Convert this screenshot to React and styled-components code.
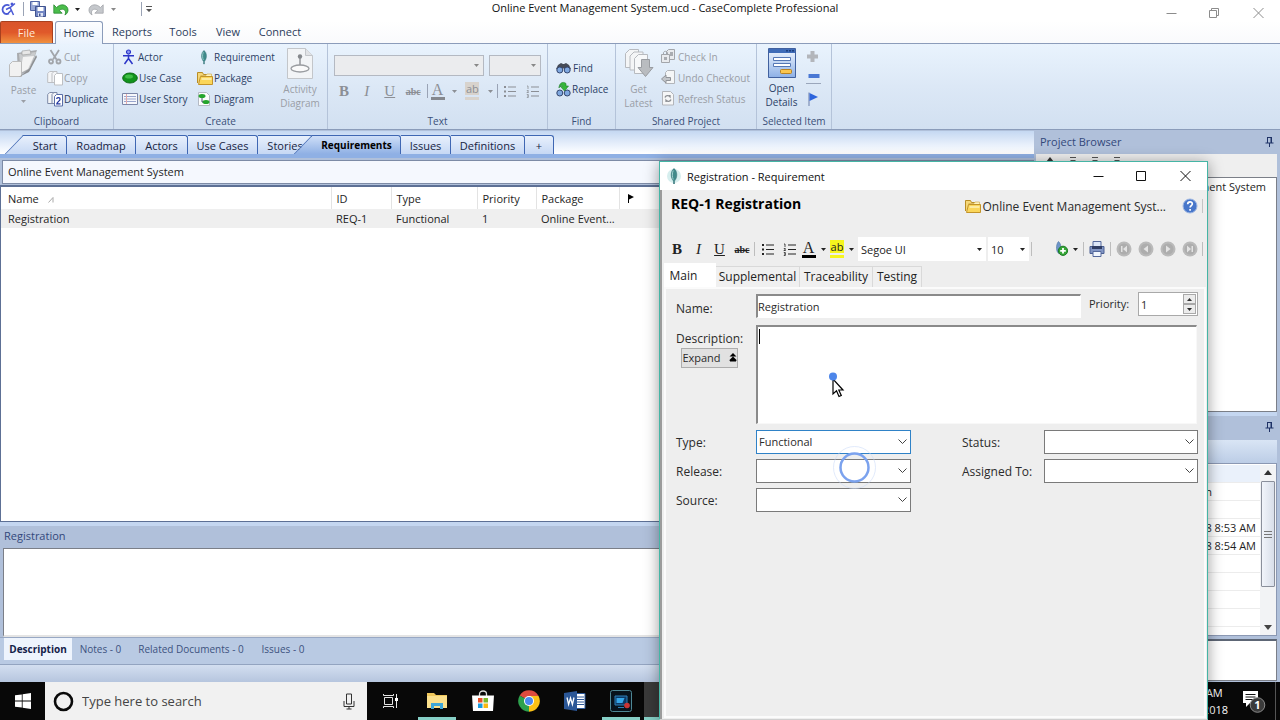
import React from 'react';
import styled, { createGlobalStyle, css } from 'styled-components';

const UI = '"Open Sans", "Noto Sans", sans-serif';
const SERIF = '"Liberation Serif", serif';

const GlobalStyle = createGlobalStyle`
  *, *::before, *::after { box-sizing: border-box; }
  html, body { margin: 0; height: 100%; }
  body { font-family: ${UI}; font-size: 11px; color: #1e1e1e; background: #b0c0da; overflow: hidden; }
  #root { height: 100%; }
  button, input, select, textarea { font: inherit; color: inherit; margin: 0; }
  button { background: none; border: 0; padding: 0; white-space: nowrap; }
  svg { display: block; flex: none; }
`;

/* ---------- shell ---------- */
const Desktop = styled.div`
  position: relative;
  display: flex;
  flex-direction: column;
  height: 100vh;
  overflow: hidden;
`;

const TitleBar = styled.header`
  display: flex;
  align-items: center;
  flex: none;
  height: 21px;
  background: #fff;
`;
const QuickAccess = styled.div`
  display: flex;
  align-items: center;
  align-self: flex-start;
  flex: none;
  width: 156px;
  height: 18px;
  padding-left: 1px;
`;
const QuickButton = styled.button`
  display: flex;
  align-items: center;
  justify-content: center;
  width: ${p => p.$w || 16}px;
  margin-left: ${p => p.$gap || 0}px;
  color: ${p => p.$color || '#222'};
`;
const Separator = styled.span`
  flex: none;
  width: 1px;
  height: ${p => p.$h || 14}px;
  margin: 0 ${p => p.$m || 0}px;
  background: ${p => p.$color || '#9aa3b5'};
`;
const AppTitle = styled.h1`
  flex: 1;
  margin: 0;
  padding: 0 0 6px 24px;
  font-size: 11px;
  line-height: 15px;
  font-weight: 400;
  text-align: center;
  color: #111;
`;
const WindowControls = styled.div`
  display: flex;
  flex: none;
  align-self: flex-start;
  padding-top: ${p => p.$top || 6}px;
  width: 130px;
  color: ${p => p.$color || '#8c8c8c'};
  button { flex: 1; display: flex; justify-content: center; }
`;

/* ---------- ribbon ---------- */
const RibbonTabs = styled.nav`
  display: flex;
  align-items: flex-end;
  flex: none;
  height: 23px;
  background: linear-gradient(#fff, #f9fafc);
  border-bottom: 1px solid #8b9cba;
`;
const RibbonTab = styled.button`
  width: ${p => p.$w}px;
  height: 22px;
  font-size: 11px;
  line-height: 20px;
  color: #2c3c5c;
  ${p => p.$kind === 'file' && css`
    margin-right: 2px;
    color: #ffe9d8;
    background: linear-gradient(#d9542b, #e0592a 50%, #f0913f);
    border: 1px solid #a8401f;
    border-bottom: 0;
    border-radius: 2px 2px 0 0;
  `}
  ${p => p.$kind === 'active' && css`
    height: 23px;
    margin-bottom: -1px;
    background: linear-gradient(#fdfeff, #eaf3fd);
    border: 1px solid #8b9cba;
    border-bottom: 0;
    border-radius: 3px 3px 0 0;
  `}
`;
const Ribbon = styled.div`
  display: flex;
  flex: none;
  height: 86px;
  background: linear-gradient(#e9f3fd, #dce8f6 50%, #d2e0f1);
  border-bottom: 1px solid #8b9cba;
`;
const Group = styled.section`
  display: flex;
  flex-direction: column;
  flex: none;
  width: ${p => p.$w}px;
  border-right: 1px solid #b4c3d9;
`;
const GroupBody = styled.div`
  display: flex;
  flex: 1;
  padding: 2px 0 0 ${p => p.$pad || 0}px;
`;
const GroupLabel = styled.h2`
  margin: 0;
  height: 16px;
  font-size: 10px;
  line-height: 16px;
  font-weight: 400;
  text-align: center;
  color: #3b4f78;
`;
const Stack = styled.div`
  display: flex;
  flex-direction: column;
  flex: none;
  width: ${p => p.$w}px;
`;
const FindStack = styled(Stack)`
  padding-top: 11px;
`;
const SmallButton = styled.button`
  display: flex;
  align-items: center;
  gap: ${p => p.$gap || 1}px;
  height: 21px;
  font-size: 10px;
  color: ${p => (p.$off ? '#9a9ea6' : '#2c3f66')};
`;
const BigButton = styled.button`
  display: flex;
  flex-direction: column;
  align-items: center;
  flex: none;
  width: ${p => p.$w}px;
  padding-top: 2px;
  font-size: 10px;
  line-height: 14px;
  color: ${p => (p.$off ? '#9a9ea6' : '#2c3f66')};
  svg + span { margin-top: 3px; }
  span + svg { margin-top: 3px; }
`;
const ComboRow = styled.div`
  display: flex;
  gap: 5px;
  padding: 9px 0 0 0;
`;
const RibbonCombo = styled.label`
  display: grid;
  align-items: center;
  width: ${p => p.$w}px;
  height: 21px;
  background: #ebecee;
  border: 1px solid #b4b9c2;
  > * { grid-area: 1 / 1; }
  svg { justify-self: end; margin-right: 4px; pointer-events: none; }
  select { appearance: none; width: 100%; height: 100%; border: 0; background: none; }
`;
const FormatRow = styled.div`
  display: flex;
  align-items: center;
  height: ${p => p.$h || 30}px;
  color: ${p => p.$color || '#8c8f95'};
`;
const FormatButton = styled.button`
  display: flex;
  align-items: center;
  justify-content: center;
  width: ${p => p.$w}px;
  height: 20px;
  font-family: ${SERIF};
  font-size: 15px;
  font-weight: ${p => (p.$bold ? 700 : 400)};
  font-style: ${p => (p.$italic ? 'italic' : 'normal')};
  text-decoration: ${p => p.$deco || 'none'};
`;
const StrikeButton = styled(FormatButton)`
  font-size: 10px;
  font-weight: 700;
  text-decoration: line-through;
`;
const InkLetter = styled.span`
  width: 14px;
  height: 18px;
  line-height: 15px;
  text-align: center;
  font-size: 16px;
  border-bottom: 3px solid ${p => p.$bar};
`;
const MarkLetter = styled(InkLetter)`
  font-family: ${UI};
  font-size: 11px;
  line-height: 13px;
  background: linear-gradient(${p => p.$fill} 13px, transparent 13px);
`;

/* ---------- workspace ---------- */
const Workspace = styled.div`
  display: flex;
  flex: 1;
  min-height: 0;
  padding-top: 1px;
  background: #b0c0da;
`;
const DocumentArea = styled.main`
  display: flex;
  flex-direction: column;
  flex: 1;
  min-width: 0;
`;
const DocTabs = styled.nav`
  display: flex;
  align-items: flex-end;
  flex: none;
  height: 27px;
  padding-left: 24px;
  background: linear-gradient(#c5d8f2, #eef4fd 70%, #fff);
  border-bottom: 4px solid #8fb0e4;
`;
const DocTab = styled.button`
  position: relative;
  width: ${p => p.$w}px;
  height: 19px;
  font-size: 11px;
  line-height: 17px;
  color: #17233f;
  background: linear-gradient(#e8f0fc, #c6d8f4);
  border: 1px solid #3f67b3;
  border-bottom: 0;
  border-left: 0;
  border-radius: 0 3px 0 0;
  ${p => p.$slant && css`
    span { position: relative; }
    &::before {
      content: '';
      position: absolute;
      top: -1px;
      bottom: 0;
      left: -10px;
      width: 24px;
      background: inherit;
      border-top: 1px solid #3f67b3;
      border-left: 1px solid #3f67b3;
      transform: skewX(-44deg);
    }
  `}
  ${p => p.$active && css`
    font-size: 10px;
    font-weight: 700;
    color: #000;
    background: linear-gradient(#cfdff8, #8fb0e4);
  `}
`;
const Breadcrumb = styled.div`
  flex: none;
  margin: 2px 0 1px 2px;
  padding-left: 5px;
  height: 24px;
  line-height: 21px;
  background: #f5f8fe;
  border: 1px solid #7d8ba6;
`;
const GridFrame = styled.div`
  flex: 1;
  min-height: 0;
  background: #fff;
  border: 1px solid #5d7095;
  border-top-width: 2px;
`;
const DataTable = styled.table`
  width: 100%;
  table-layout: fixed;
  border-collapse: collapse;
  th, td { padding: 0 0 0 5px; font-weight: 400; text-align: left; white-space: nowrap; overflow: hidden; }
  th { height: 22px; border-right: 1px solid #e3e3e3; }
  th svg { display: inline-block; }
  td { height: 19px; background: #efefef; }
  th:first-child, td:first-child { padding-left: 7px; }
`;
const SortMark = styled.span`
  display: inline-block;
  margin-left: 9px;
`;
const PaneCaption = styled.div`
  display: flex;
  align-items: center;
  justify-content: space-between;
  flex: none;
  height: ${p => p.$h || 22}px;
  padding: 0 3px 3px 4px;
  color: #33487a;
  background: #b0c0da;
  border-top: ${p => (p.$line ? '4px solid #c4d6f0' : '0')};
`;
const NotesBox = styled.div`
  flex: none;
  height: 89px;
  margin-left: 3px;
  background: #fff;
  border: 1px solid #7b7f88;
  border-bottom: 2px solid #e4e4e4;
`;
const BottomTabs = styled.nav`
  display: flex;
  align-items: flex-start;
  flex: none;
  height: 28px;
  padding-left: 4px;
  background: #b9cae3;
  border-top: 1px solid #98a8c4;
  border-bottom: 1px solid #93a4c0;
`;
const BottomTab = styled.button`
  width: ${p => p.$w}px;
  height: 22px;
  font-size: 10px;
  color: #3d527f;
  ${p => p.$active && css`
    font-weight: 700;
    color: #14224a;
    background: #eef4fd;
  `}
`;
const StatusBar = styled.div`
  flex: none;
  height: 17px;
  background: linear-gradient(#d3dff0, #b6c5de);
`;
const Dock = styled.aside`
  display: flex;
  flex-direction: column;
  flex: none;
  width: 246px;
  padding: 1px 3px 1px 2px;
`;
const DockTools = styled.div`
  display: flex;
  align-items: flex-start;
  gap: 16px;
  flex: none;
  height: 23px;
  padding: 3px 0 0 10px;
  color: #444;
  background: ${p => (p.$tint ? 'linear-gradient(#d9e5f5, #bccde6)' : '#efefef')};
`;
const Tree = styled.ul`
  flex: 1;
  margin: 0;
  padding: 0 10px 0 0;
  list-style: none;
  text-align: right;
  line-height: 18px;
  background: #fff;
  border: 1px solid #7b7f88;
`;
const Properties = styled.div`
  display: flex;
  flex: none;
  height: 173px;
  padding-top: 1px;
  background: #fff;
  border: 1px solid #8b98b3;
`;
const PropertyList = styled.ul`
  flex: 1;
  margin: 0;
  padding: 0;
  overflow: hidden;
  list-style: none;
  font-size: 11px;
`;
const Property = styled.li`
  height: 18px;
  padding-right: ${p => p.$end || 4}px;
  line-height: 18px;
  text-align: right;
  background: ${p => (p.$head ? '#eaf1fb' : '#fff')};
  border-bottom: 1px solid #ececec;
`;
const ScrollTrack = styled.div`
  display: flex;
  flex-direction: column;
  align-items: center;
  flex: none;
  width: 16px;
  padding: 5px 1px;
  background: #f2f3f5;
`;
const ScrollThumb = styled.div`
  display: flex;
  align-items: center;
  justify-content: center;
  width: 14px;
  height: 106px;
  margin: 6px 0 auto;
  background: linear-gradient(90deg, #f1f4fa, #d8dee9);
  border: 1px solid #8a8f9b;
  border-radius: 1px;
`;
const Hint = styled.div`
  flex: none;
  height: 42px;
  margin-top: 3px;
  background: #fff;
  border: 1px solid #7b7f88;
  border-top: 2px solid #5d6675;
`;

/* ---------- taskbar ---------- */
const Taskbar = styled.footer`
  display: flex;
  flex: none;
  height: 38px;
  color: #fff;
  background: #080808;
`;
const TaskButton = styled.button`
  display: flex;
  align-items: center;
  justify-content: center;
  flex: none;
  width: ${p => p.$w || 46}px;
  height: 38px;
  border: solid transparent;
  border-width: 3px 0 3px;
  ${p => p.$running && css`
    width: 38px;
    margin: 0 4px;
    border-bottom: 3px solid #86cfc6;
  `}
  ${p => p.$current && css`
    background: #3a3a3a;
    border-color: #3a3a3a;
    border-bottom-color: #86cfc6;
  `}
`;
const SearchBox = styled.label`
  display: flex;
  align-items: center;
  flex: none;
  width: 322px;
  padding: 0 12px 0 8px;
  color: #333;
  background: #f1f1f1;
  input {
    flex: 1;
    min-width: 0;
    padding: 0 0 0 8px;
    border: 0;
    outline: 0;
    background: none;
    font-size: 13px;
  }
  input::placeholder { color: #444; opacity: 1; }
`;
const Tray = styled.div`
  display: flex;
  align-items: center;
  margin-left: auto;
`;
const Clock = styled.time`
  width: 60px;
  font-size: 11px;
  line-height: 17px;
  text-align: center;
`;
const ActionCenter = styled.button`
  display: flex;
  justify-content: center;
  width: 43px;
  height: 24px;
`;
const ShowDesktop = styled.button`
  width: 5px;
  height: 38px;
  border-left: 1px solid #555;
`;

/* ---------- dialog ---------- */
const Dialog = styled.section`
  position: absolute;
  top: 161px;
  bottom: 0;
  left: 659px;
  width: 549px;
  display: flex;
  flex-direction: column;
  background: #eeeeee;
  border: 1px solid #45b5a5;
  border-bottom-color: #cfcfcf;
  box-shadow: 0 2px 14px rgba(0, 0, 0, 0.4);
`;
const DialogBar = styled.header`
  display: flex;
  align-items: center;
  flex: none;
  height: 28px;
  padding-left: 6px;
  background: #fff;
  h2 { flex: 1; margin: 0 0 0 5px; font-size: 11px; line-height: 15px; font-weight: 400; color: #111; }
`;
const DialogBody = styled.div`
  display: flex;
  flex-direction: column;
  flex: 1;
  min-height: 0;
  border-left: 2px solid #9b9b9b;
`;
const Heading = styled.div`
  display: flex;
  align-items: center;
  flex: none;
  height: 32px;
  padding-left: 9px;
  h3 { flex: 1; margin: 0; padding-bottom: 4px; font-size: 14px; line-height: 20px; font-weight: 700; color: #000; }
`;
const PackageLink = styled.a`
  display: flex;
  align-items: center;
  gap: 1px;
  margin-right: 16px;
  font-size: 12px;
  color: #2b2b2b;
  text-decoration: none;
`;
const Tools = styled(FormatRow)`
  flex: none;
  margin-top: 13px;
  padding: 0 3px 0 4px;
`;
const CaretButton = styled.button`
  display: flex;
  justify-content: center;
  width: ${p => p.$w || 14}px;
`;
const ToolCombo = styled.label`
  display: grid;
  align-items: center;
  width: ${p => p.$w}px;
  height: 24px;
  margin-right: 2px;
  background: #fff;
  > * { grid-area: 1 / 1; }
  svg { justify-self: end; margin-right: 4px; pointer-events: none; }
  select { appearance: none; width: 100%; height: 100%; padding: 0 3px; border: 0; background: none; font-size: 11px; }
`;
const ToolEnd = styled.div`
  display: flex;
  align-items: center;
  margin-left: auto;
`;
const NavButton = styled.button`
  display: flex;
  justify-content: center;
  width: 22px;
`;
const FormTabs = styled.nav`
  display: flex;
  align-items: flex-end;
  flex: none;
  height: 24px;
  padding-left: 2px;
`;
const FormTab = styled.button`
  width: ${p => p.$w}px;
  height: 21px;
  font-size: 12px;
  line-height: 20px;
  color: #222;
  background: #f0f0f0;
  border: 1px solid #d9d9d9;
  border-width: 1px 1px 0 0;
  ${p => p.$active && css`
    height: 24px;
    padding-right: 12px;
    background: #fff;
    border-color: #fff;
  `}
`;
const FormPanel = styled.form`
  flex: 1;
  margin: 0 1px 1px 2px;
  padding: 3px 6px 0 10px;
  border: 2px solid #fbfbfb;
  font-size: 12px;
  color: #2b2b2b;
`;
const FormRow = styled.div`
  display: flex;
  align-items: flex-start;
  margin-bottom: ${p => p.$gap || 0}px;
`;
const LabelCell = styled.div`
  display: flex;
  flex-direction: column;
  flex: none;
  width: 80px;
`;
const FieldLabel = styled.label`
  line-height: 17px;
  padding-top: ${p => p.$drop || 0}px;
`;
const NameInput = styled.input`
  flex: 1;
  min-width: 0;
  height: 24px;
  margin-top: 2px;
  padding: 0 0 1px;
  font-size: 11px;
  background: #fff;
  border: 1px solid #fff;
  border-top: 2px solid #8a8a8a;
  border-left: 2px solid #8a8a8a;
  outline: 0;
`;
const PriorityLabel = styled(FieldLabel)`
  width: 57px;
  padding-left: 8px;
  font-size: 11px;
`;
const Spinner = styled.div`
  display: flex;
  flex: none;
  width: 60px;
  height: 24px;
  padding: 1px;
  background: #fff;
  border: 1px solid #a9a9a9;
  input {
    flex: 1;
    min-width: 0;
    padding: 0 1px;
    border: 0;
    outline: 0;
    font-size: 11px;
    appearance: textfield;
  }
  input::-webkit-inner-spin-button { display: none; }
`;
const SpinButtons = styled.div`
  display: flex;
  flex-direction: column;
  width: 13px;
  button {
    flex: 1;
    display: flex;
    align-items: center;
    justify-content: center;
    background: #ececec;
    border: 1px solid #a9a9a9;
  }
`;
const ExpandButton = styled.button`
  display: flex;
  align-items: center;
  justify-content: center;
  gap: 8px;
  width: 57px;
  height: 20px;
  margin: 1px 0 0 5px;
  padding-bottom: 1px;
  font-size: 11px;
  background: #e1e1e1;
  border: 1px solid #adadad;
`;
const TextFrame = styled.div`
  position: relative;
  flex: 1;
  height: 99px;
  margin-right: 1px;
  &::after {
    content: '';
    position: absolute;
    top: 4px;
    left: 3px;
    width: 1px;
    height: 15px;
    background: #000;
  }
  textarea {
    display: block;
    width: 100%;
    height: 100%;
    resize: none;
    background: #fff;
    border: 1px solid #f8f8f8;
    border-top: 2px solid #8a8a8a;
    border-left: 2px solid #8a8a8a;
    outline: 0;
  }
`;
const SelectGrid = styled.div`
  display: grid;
  grid-template-columns: 80px 155px 1fr 82px 154px;
  grid-auto-rows: 24px;
  row-gap: 5px;
  align-items: center;
`;
const SelectBox = styled.div`
  display: grid;
  align-items: center;
  grid-column: ${p => p.$col};
  height: 24px;
  background: #fff;
  border: 1px solid ${p => (p.$focus ? '#2f82c7' : '#7a7a7a')};
  > * { grid-area: 1 / 1; }
  svg { justify-self: end; margin-right: 3px; pointer-events: none; }
  select { appearance: none; width: 100%; height: 22px; padding: 0 2px 1px; border: 0; background: none; outline: 0; font-size: 11px; }
`;
const GridLabel = styled.label`
  grid-column: ${p => p.$col};
`;

/* ---------- pointer ---------- */
const ClickRing = styled.svg`
  position: absolute;
  top: 445px;
  left: 832px;
  pointer-events: none;
`;
const Pointer = styled.svg`
  position: absolute;
  top: 371px;
  left: 826px;
  pointer-events: none;
`;

/* ---------- icons ---------- */
const Caret = ({ c = 'currentColor', s = 5 }) => (
  <svg width={s} height={s === 5 ? 3 : 5} viewBox="0 0 5 3"><path d="M0 0h5L2.500 3z" fill={c} /></svg>
);
const LogoIcon = () => (
  <svg width="16" height="16" viewBox="0 0 16 16" fill="none" stroke="#4a5ad6">
    <path d="M8.500 4.500C5 3 1.500 5 1.500 8.500s3 5.500 6.500 4" strokeWidth="1.800" />
    <path d="M5 8.500l4-2 5-4M9 6.500l1.500 3 2 4.500M10 9.500L7 12.500" strokeWidth="1.500" />
    <circle cx="11" cy="3" r="1.500" fill="#4a5ad6" stroke="none" />
  </svg>
);
const SaveAllIcon = () => (
  <svg width="16" height="16" viewBox="0 0 16 16">
    <path d="M.5.5h9v9h-9z" fill="#9aa9d6" stroke="#5165a5" /><path d="M2.500 1h5v3h-5z" fill="#fff" />
    <path d="M5.500 5.500h10v10h-10z" fill="#7387c4" stroke="#40538f" />
    <path d="M7.500 6h6v4h-6z" fill="#fff" /><path d="M8 12h5v3.500H8z" fill="#dfe5f5" /><path d="M9 12.500h1.500v2.500H9z" fill="#40538f" />
  </svg>
);
const UndoIcon = ({ c = '#4bbd4b', d = '#2a8a32', flip }) => (
  <svg width="16" height="13" viewBox="0 0 16 13">
    <path transform={flip ? 'matrix(-1 0 0 1 16 0)' : undefined}
      d="M.8 1.800v8.400h8.400L6.300 7.500c2-2 5-1.500 6 .6.500 1.200.3 2.600-.4 3.900 2.500-1.300 3.800-4 2.800-6.700C13.200 1.500 7.500.2 3.600 4.600z"
      fill={c} stroke={d} strokeWidth=".8" />
  </svg>
);
const MoreIcon = () => (
  <svg width="6" height="7" viewBox="0 0 6 7"><path d="M0 0h6v1H0zM0 3h6L3 6z" fill="#555" /></svg>
);
const MinIcon = () => <svg width="11" height="14" viewBox="0 0 11 14"><path d="M.5 7.500h10" stroke="currentColor" /></svg>;
const MaxIcon = () => <svg width="11" height="14" viewBox="0 0 11 14"><path d="M.5 2.500h9v9h-9z" fill="none" stroke="currentColor" /></svg>;
const RestoreIcon = () => (
  <svg width="11" height="14" viewBox="0 0 11 14"><path d="M.5 4.500h7v7h-7zM2.500 4.500v-2h7v7h-2" fill="none" stroke="currentColor" /></svg>
);
const CloseIcon = () => <svg width="11" height="14" viewBox="0 0 11 14"><path d="M.5 2l10 10M10.500 2l-10 10" stroke="currentColor" fill="none" /></svg>;

const PasteIcon = () => (
  <svg width="32" height="32" viewBox="0 0 32 32">
    <path d="M9 5l20-3-7 20-12 6z" fill="#a9abae" />
    <path d="M11 6l17-2-6 16-9 5z" fill="#c9cbcd" />
    <path d="M14 3l8-1 1 4-9 1z" fill="#e7e7e7" stroke="#999" strokeWidth=".6" />
    <path d="M15 9l11-1-6 13-8 4z" fill="#f3f3f3" />
    <path d="M1.500 16.500l3-3h9v15h-12z" fill="#f1f1f1" stroke="#bcbcbc" />
    <path d="M28 7l1 2-8 15-10 5 10-8z" fill="#8e9093" />
  </svg>
);
const CutIcon = () => (
  <svg width="16" height="16" viewBox="0 0 16 16" fill="none" stroke="#a2a5aa" strokeWidth="1.800">
    <path d="M3.500 1l6 9.500M12 1l-6 9.500" /><circle cx="4" cy="12.500" r="2" /><circle cx="11.500" cy="12.500" r="2" />
  </svg>
);
const CopyIcon = ({ two }) => (
  <svg width="16" height="16" viewBox="0 0 16 16">
    <path d="M.7 3.500l2-2H7v11H.7z" fill="#f4f5f7" stroke={two ? '#7d8aa8' : '#bdbfc3'} />
    <path d="M5 3.500l2-2h3v11H5z" fill="#f4f5f7" stroke={two ? '#7d8aa8' : '#bdbfc3'} />
    <path d="M7.500 5.500l2-2h6v11.500h-8z" fill="#fff" stroke={two ? '#5b6fa8' : '#bdbfc3'} />
    {two && <path d="M9.600 7.800c.3-1.500 3.500-1.500 3.500.4 0 1.500-3 2.800-3.300 4.600h3.700" fill="none" stroke="#2237a0" strokeWidth="1.300" />}
  </svg>
);
const ActorIcon = () => (
  <svg width="13" height="16" viewBox="0 0 13 16" fill="none" stroke="#2b35c8" strokeWidth="1.500">
    <circle cx="6.500" cy="3" r="2" fill="#8e9af0" strokeWidth="1.200" /><path d="M1 6.700h11M6.500 5.500v4.500M6.500 9.500L2.500 15M6.500 9.500l4 5.500" />
  </svg>
);
const UseCaseIcon = () => (
  <svg width="16" height="12" viewBox="0 0 16 12"><ellipse cx="8" cy="6" rx="7.300" ry="5" fill="#12931c" stroke="#0a6a12" /><ellipse cx="7" cy="4.500" rx="4" ry="2" fill="#3fbe45" /></svg>
);
const StoryIcon = () => (
  <svg width="16" height="12" viewBox="0 0 16 12"><path d="M.5.5h15v11H.5z" fill="#f6f7fb" stroke="#7c87a8" /><path d="M2 3.500h12M2 6h12M2 8.500h12" stroke="#98a5cd" /><path d="M4.500 1v10" stroke="#e4a9a9" /></svg>
);
const RequirementIcon = ({ big }) => (
  <svg width={big ? 16 : 14} height="16" viewBox="0 0 16 16">
    {big && <circle cx="8" cy="8" r="7" fill="#d6eeee" />}
    <path d="M8 .5c3.500 2.500 3.800 9 .5 12.500V16h-1v-3C4.200 9.500 4.500 3 8 .5z" fill="#3f8a8a" stroke="#2f6d73" strokeWidth=".5" />
    <path d="M7.200 2.500c-1.200 3-1 6.500 0 9" stroke="#9fd0cf" fill="none" />
  </svg>
);
const FolderIcon = () => (
  <svg width="16" height="14" viewBox="0 0 16 14">
    <path d="M.5 12V1.500h5l1 2h7V6" fill="#f5d778" stroke="#b98d25" />
    <path d="M3.500 4.500H9l1-1.500h4.500v3" fill="#fff3bf" stroke="#caa23c" strokeWidth=".6" />
    <path d="M3.500 5.500h12v8h-14z" fill="#fbd65a" stroke="#c3942a" />
    <path d="M4.500 7h10v2h-10z" fill="#fdeba0" />
  </svg>
);
const DiagramIcon = () => (
  <svg width="14" height="16" viewBox="0 0 14 16">
    <path d="M1.500 1.500h8l3 3v10h-11z" fill="#fcfdfc" stroke="#b4bac4" />
    <ellipse cx="5" cy="5" rx="3.500" ry="2" fill="#25a52c" /><ellipse cx="9" cy="11" rx="3.500" ry="2" fill="#25a52c" /><path d="M5 7v4h1" fill="none" stroke="#456" />
  </svg>
);
const ActivityIcon = () => (
  <svg width="26" height="31" viewBox="0 0 26 31">
    <path d="M.5.500h18l7 7v23H.5z" fill="#f2f4f6" stroke="#c3c6ca" /><path d="M18.500.5v7h7" fill="#e1e3e6" stroke="#c3c6ca" />
    <circle cx="13" cy="8.500" r="2.200" fill="#85888c" /><path d="M13 10v7" stroke="#85888c" strokeWidth="1.300" /><ellipse cx="13" cy="20.500" rx="9" ry="3.500" fill="#fafafa" stroke="#999ca0" strokeWidth="1.300" />
  </svg>
);
const ListIcon = () => (
  <svg width="13" height="13" viewBox="0 0 13 13"><path d="M1 1h2v2H1zM1 5.500h2v2H1zM1 10h2v2H1z" fill="currentColor" /><path d="M5 2h8M5 6.500h8M5 11h8" stroke="currentColor" /></svg>
);
const NumberListIcon = () => (
  <svg width="13" height="13" viewBox="0 0 13 13" fill="none" stroke="currentColor"><path d="M5 2h8M5 6.500h8M5 11h8" /><path d="M1 1h1v3M.8 5.500h1.500v1l-1.500 1h2M.8 9.500h1.500v3H.8M1 11h1.300" strokeWidth=".8" /></svg>
);
const FindIcon = () => (
  <svg width="15" height="12" viewBox="0 0 15 12">
    <path d="M2 3l3-2 2 1h1l2-1 3 2 2 4-6 1-2-2-2 2-5-1z" fill="#454b57" />
    <circle cx="3.800" cy="8" r="3" fill="#7fa8e0" stroke="#34466e" /><circle cx="11.200" cy="8" r="3" fill="#7fa8e0" stroke="#34466e" />
  </svg>
);
const ReplaceIcon = () => (
  <svg width="15" height="16" viewBox="0 0 15 16">
    <circle cx="3.800" cy="12" r="3" fill="#7fa8e0" stroke="#34466e" /><circle cx="11.200" cy="12" r="3" fill="#7fa8e0" stroke="#34466e" />
    <path d="M3 7C3 2 7 0 10 2.500V5h2.500l-4 5-4.500-5 2.500.2C6 3.500 4 4.500 3 7z" fill="#35b53a" stroke="#1d7d26" strokeWidth=".6" />
  </svg>
);
const GetLatestIcon = () => (
  <svg width="30" height="31" viewBox="0 0 30 31" stroke="#b7babf">
    <path d="M1.500 5.500l4-4h9v18h-13z" fill="#f4f5f6" /><path d="M6 8l4-4h9v18H6z" fill="#f4f5f6" /><path d="M10.500 10.500l4-4h9v19h-13z" fill="#f7f8f9" />
    <path d="M17.500 11.500h8v8H29l-7.500 9-7.500-9h3.500z" fill="#b9bcc0" stroke="#999ca1" />
  </svg>
);
const CheckInIcon = () => (
  <svg width="15" height="15" viewBox="0 0 15 15" stroke="#a3a6ab" fill="#e9ebee"><path d="M5.500 2.500l2-2h6v10h-8z" /><path d="M.5 5.500h8v8h-8z" /><path d="M2.500 5.500V3.800c0-2 4-2 4 0v1.700" fill="none" /><path d="M3 8h3v3H3zM9 3h3v4H9z" fill="#a9acb1" stroke="none" /></svg>
);
const UndoCheckIcon = () => (
  <svg width="15" height="15" viewBox="0 0 15 15" stroke="#b2b5ba"><path d="M4.500 2.500l2-2h7v13h-9z" fill="#f5f6f7" /><path d="M.5 9L5 5v2.500h4.500v3H5V13z" fill="#c3c6ca" stroke="#909398" /></svg>
);
const RefreshIcon = () => (
  <svg width="15" height="15" viewBox="0 0 15 15" stroke="#b2b5ba"><path d="M1.500.5h8l3 3v10.500h-11z" fill="#f5f6f7" /><path d="M4 6.500c.5-2 3.500-2.500 5-.8V4M10 8.500c-.5 2-3.500 2.500-5 .8V11" fill="none" stroke="#8d9095" strokeWidth="1.300" /></svg>
);
const DetailsIcon = () => (
  <svg width="28" height="30" viewBox="0 0 28 30">
    <defs>
      <linearGradient id="pane" x1="0" y1="0" x2="0" y2="1"><stop offset="0" stopColor="#f3f8ff" /><stop offset="1" stopColor="#8db0e6" /></linearGradient>
    </defs>
    <path d="M.5.5h27v29H.5z" fill="url(#pane)" stroke="#41619f" /><path d="M1 1h26v4H1z" fill="#3f6cb8" /><path d="M18 2h2v1.500h-2zM21 2h2v1.500h-2zM24 2h2v1.500h-2z" fill="#1d3f7d" />
    <path d="M5.500 9.500h17v3h-17zM5.500 15.500h17v3h-17z" fill="#fff" stroke="#5577b5" /><rect x="12.500" y="21.500" width="11" height="4" rx="1" fill="#fbc64f" stroke="#b98321" />
  </svg>
);
const PlusIcon = () => <svg width="13" height="13" viewBox="0 0 13 13"><path d="M4.500 1h4v3.500H12v4H8.500V12h-4V8.500H1v-4h3.500z" fill="#b3b6bb" /></svg>;
const MinusIcon = () => <svg width="15" height="13" viewBox="0 0 15 13"><path d="M2.500 3h11v4h-11z" fill="#4a78d4" /><path d="M0 12.500h15" stroke="#9aa6bb" /></svg>;
const FlagIcon = () => <svg width="13" height="14" viewBox="0 0 13 14"><path d="M3 .5V14" stroke="#8595bb" strokeWidth="1.300" /><path d="M3.500 1L12 5 3.500 9z" fill="#2d64dc" /></svg>;
const PinIcon = () => <svg width="9" height="10" viewBox="0 0 9 10"><path d="M2.500 1v5M6.500 1v5M2 .5h5M.5 6h8M4.500 6v4" stroke="#1f3266" fill="none" /><path d="M5.500 1h1v5h-1z" fill="#1f3266" /></svg>;
const HelpIcon = () => (
  <svg width="16" height="16" viewBox="0 0 16 16"><circle cx="8" cy="8" r="7" fill="#4776ca" stroke="#9db6e2" /><path d="M5.700 6.300C5.700 3 10.500 3.200 10.300 6c0 1.500-2.200 1.700-2.200 3.500M8.100 11v1.700" fill="none" stroke="#fff" strokeWidth="1.700" /></svg>
);
const NewReqIcon = () => (
  <svg width="15" height="16" viewBox="0 0 15 16"><path d="M4.500.5c3 2.500 3 8 .5 12-3-1-3.500-9-.5-12z" fill="#6e95c9" stroke="#4d74a5" strokeWidth=".6" /><circle cx="9" cy="9.800" r="4.600" fill="#35a636" stroke="#1a7a22" /><path d="M9 7v5.600M6.200 9.800h5.600" stroke="#fff" strokeWidth="1.800" /></svg>
);
const PrintIcon = () => (
  <svg width="16" height="16" viewBox="0 0 16 16"><path d="M4 .5h8V6H4z" fill="#dce6f7" stroke="#55699c" /><path d="M1 5.500h14v7H1z" fill="#8296c4" stroke="#4b5f92" /><path d="M3 5h10v3H3z" fill="#2f3d63" /><path d="M4 10.500h8v5H4z" fill="#f1f6fe" stroke="#55699c" /></svg>
);
const NavIcon = ({ d }) => (
  <svg width="16" height="16" viewBox="0 0 16 16"><circle cx="8" cy="8" r="7.500" fill="#bababa" /><circle cx="8" cy="8" r="5.500" fill="#adadad" /><path d={d} fill="#e3e3e3" /></svg>
);
const DoubleUp = () => <svg width="8" height="9" viewBox="0 0 8 9"><path d="M4 0l3.500 3.500H.5zM4 3.500L8 7.500H0zM1 7.500h6v1H1z" fill="#000" /></svg>;
const Chevron = () => <svg width="9" height="6" viewBox="0 0 9 6"><path d="M.5.5l4 4 4-4" fill="none" stroke="#444" /></svg>;
const ArrowUp = ({ s = 5 }) => <svg width={s} height={s === 5 ? 3 : 5} viewBox="0 0 5 3"><path d="M0 3h5L2.500 0z" fill="#333" /></svg>;

const WindowsIcon = () => <svg width="16" height="16" viewBox="0 0 16 16"><path d="M0 2.300L6.800 1.400v6.200H0zM7.600 1.200L16 0v7.600H7.600zM0 8.400h6.800v6.200L0 13.700zM7.600 8.400H16V16l-8.400-1.200z" fill="#fff" /></svg>;
const CortanaIcon = () => <svg width="21" height="21" viewBox="0 0 21 21"><circle cx="10.500" cy="10.500" r="8.500" fill="none" stroke="#0a0a0a" strokeWidth="2.600" /></svg>;
const MicIcon = () => <svg width="12" height="17" viewBox="0 0 12 17" fill="none" stroke="#333"><path d="M3.500 1h5v10h-5zM1 8v5.500h10V8M6 13.500V16M3.500 16h5" /></svg>;
const TaskViewIcon = () => <svg width="17" height="16" viewBox="0 0 17 16" fill="none" stroke="#e5e5e5"><path d="M2.500 4.500h8v7h-8zM1.500 1v1.500h10V1M1.500 15v-1.500h10V15M14.500 1v14" /><path d="M13 5h3v3h-3z" fill="#fff" stroke="none" /></svg>;
const ExplorerIcon = () => <svg width="20" height="18" viewBox="0 0 20 18"><path d="M0 1h7l2 2h11v13H0z" fill="#efc75b" /><path d="M0 4h20v12H0z" fill="#fbe08c" /><path d="M4 17v-6h12v6h-3v-3H7v3z" fill="#3fa7d8" /></svg>;
const StoreIcon = () => <svg width="22" height="22" viewBox="0 0 22 22"><path d="M7.500 6V4c0-4 7-4 7 0v2" fill="none" stroke="#ddd" strokeWidth="1.300" /><path d="M0 5.500h22L21 21H1z" fill="#fff" /><path d="M6 8h4.500v4.500H6z" fill="#e8502a" /><path d="M11.500 8H16v4.500h-4.500z" fill="#7ab82e" /><path d="M6 13.500h4.500V18H6z" fill="#1a9be0" /><path d="M11.500 13.500H16V18h-4.500z" fill="#fbb813" /></svg>;
const ChromeIcon = () => (
  <svg width="22" height="22" viewBox="0 0 22 22">
    <path d="M11 11L1.700 5.600A10.700 10.700 0 0 1 20.300 5.600z" fill="#dd4b3e" /><path d="M11 11l9.300-5.400A10.700 10.700 0 0 1 11 21.700z" fill="#fbc116" /><path d="M11 11v10.700A10.700 10.700 0 0 1 1.700 5.600z" fill="#2da14d" />
    <path d="M11 6h9.500L14.500 14z" fill="#fbc116" /><path d="M2 6l5 8 4 2-2 5.500z" fill="#2da14d" /><circle cx="11" cy="11" r="5" fill="#fff" /><circle cx="11" cy="11" r="4" fill="#4a89ee" />
  </svg>
);
const WordIcon = () => (
  <svg width="22" height="20" viewBox="0 0 22 20"><path d="M11 2.500h10v15H11z" fill="#fff" stroke="#2b5797" /><path d="M13 6h7M13 8.500h7M13 11h7M13 13.500h7" stroke="#2b5797" /><path d="M0 2l13-2v20L0 18z" fill="#2b5797" /><path d="M3 6.500l1.600 7L6.500 7l1.900 6.500 1.600-7" fill="none" stroke="#fff" strokeWidth="1.300" /></svg>
);
const RecorderIcon = () => (
  <svg width="22" height="22" viewBox="0 0 22 22"><rect x=".5" y=".5" width="21" height="21" rx="2" fill="#07131c" stroke="#4e8795" /><path d="M5 6h12v9H5z" fill="#0c3a66" stroke="#2e7fb5" /><path d="M6.500 8l8 0-2 5h-6z" fill="#35a6e8" /><path d="M8 17.500h6" stroke="#2e7fb5" /><circle cx="17" cy="15.500" r="2.800" fill="#c93434" /></svg>
);
const CaseIcon = () => <svg width="18" height="18" viewBox="0 0 18 18"><circle cx="9" cy="9" r="8" fill="#7fb1dd" /></svg>;
const NotifyIcon = () => (
  <svg width="24" height="24" viewBox="0 0 24 24"><path d="M1 2h15v12H8l-4 4v-4H1z" fill="#fff" /><path d="M3.500 5.500h10M3.500 8h10M3.500 10.500h10" stroke="#111" /><circle cx="15.500" cy="16" r="7.300" fill="#3b3b3b" stroke="#8a8a8a" /><text x="15.500" y="20" fontSize="11" fontWeight="700" textAnchor="middle" fill="#fff">1</text></svg>
);

/* ---------- parts ---------- */
const documentTabs = [
  { label: 'Start', w: 43, slant: true },
  { label: 'Roadmap', w: 69 },
  { label: 'Actors', w: 52 },
  { label: 'Use Cases', w: 70 },
  { label: 'Stories', w: 55 },
  { label: 'Requirements', w: 88, slant: true, active: true },
  { label: 'Issues', w: 50 },
  { label: 'Definitions', w: 74 },
  { label: '+', w: 29 },
];

function Select({ id, value, col, focus }) {
  return (
    <SelectBox $col={col} $focus={focus}>
      <select id={id} defaultValue={value || ''}><option value={value || ''}>{value || ''}</option></select>
      <Chevron />
    </SelectBox>
  );
}

function RibbonPanel() {
  return (
    <Ribbon>
      <Group $w={114}>
        <GroupBody>
          <BigButton $w={47} $off><PasteIcon /><span>Paste</span><Caret /></BigButton>
          <Stack $w={66}>
            <SmallButton $off><CutIcon />Cut</SmallButton>
            <SmallButton $off><CopyIcon />Copy</SmallButton>
            <SmallButton><CopyIcon two />Duplicate</SmallButton>
          </Stack>
        </GroupBody>
        <GroupLabel>Clipboard</GroupLabel>
      </Group>
      <Group $w={214}>
        <GroupBody $pad={8}>
          <Stack $w={75}>
            <SmallButton $gap={3}><ActorIcon />Actor</SmallButton>
            <SmallButton><UseCaseIcon />Use Case</SmallButton>
            <SmallButton><StoryIcon />User Story</SmallButton>
          </Stack>
          <Stack $w={78}>
            <SmallButton $gap={3}><RequirementIcon />Requirement</SmallButton>
            <SmallButton><FolderIcon />Package</SmallButton>
            <SmallButton $gap={3}><DiagramIcon />Diagram</SmallButton>
          </Stack>
          <BigButton $w={50} $off><ActivityIcon /><span>Activity<br />Diagram</span></BigButton>
        </GroupBody>
        <GroupLabel>Create</GroupLabel>
      </Group>
      <Group $w={220}>
        <GroupBody $pad={6}>
          <Stack $w={210}>
            <ComboRow>
              <RibbonCombo $w={150}><select aria-label="Font" /><Caret c="#888" /></RibbonCombo>
              <RibbonCombo $w={52}><select aria-label="Font size" /><Caret c="#888" /></RibbonCombo>
            </ComboRow>
            <FormatRow>
              <FormatButton $w={20} $bold>B</FormatButton>
              <FormatButton $w={26} $italic>I</FormatButton>
              <FormatButton $w={20} $deco="underline">U</FormatButton>
              <StrikeButton $w={27}>abc</StrikeButton>
              <Separator />
              <FormatButton $w={20}><InkLetter $bar="#85888e">A</InkLetter></FormatButton>
              <CaretButton><Caret /></CaretButton>
              <FormatButton $w={22}><MarkLetter $bar="#d8d3cd" $fill="#d8d3cd">ab</MarkLetter></FormatButton>
              <CaretButton><Caret /></CaretButton>
              <Separator />
              <FormatButton $w={23}><ListIcon /></FormatButton>
              <FormatButton $w={23}><NumberListIcon /></FormatButton>
            </FormatRow>
          </Stack>
        </GroupBody>
        <GroupLabel>Text</GroupLabel>
      </Group>
      <Group $w={68}>
        <GroupBody $pad={8}>
          <FindStack $w={58}>
            <SmallButton $gap={2}><FindIcon />Find</SmallButton>
            <SmallButton><ReplaceIcon />Replace</SmallButton>
          </FindStack>
        </GroupBody>
        <GroupLabel>Find</GroupLabel>
      </Group>
      <Group $w={141}>
        <GroupBody>
          <BigButton $w={45} $off><GetLatestIcon /><span>Get<br />Latest</span></BigButton>
          <Stack $w={92}>
            <SmallButton $off $gap={2}><CheckInIcon />Check In</SmallButton>
            <SmallButton $off $gap={2}><UndoCheckIcon />Undo Checkout</SmallButton>
            <SmallButton $off $gap={2}><RefreshIcon />Refresh Status</SmallButton>
          </Stack>
        </GroupBody>
        <GroupLabel>Shared Project</GroupLabel>
      </Group>
      <Group $w={75}>
        <GroupBody>
          <BigButton $w={49}><DetailsIcon /><span>Open<br />Details</span></BigButton>
          <Stack $w={20}>
            <SmallButton aria-label="Add"><PlusIcon /></SmallButton>
            <SmallButton aria-label="Remove"><MinusIcon /></SmallButton>
            <SmallButton aria-label="Flag"><FlagIcon /></SmallButton>
          </Stack>
        </GroupBody>
        <GroupLabel>Selected Item</GroupLabel>
      </Group>
    </Ribbon>
  );
}

function RequirementDialog() {
  return (
    <Dialog aria-label="Registration - Requirement">
      <DialogBar>
        <RequirementIcon big />
        <h2>Registration - Requirement</h2>
        <WindowControls $color="#111" $top={7}>
          <button aria-label="Minimize"><MinIcon /></button>
          <button aria-label="Maximize"><MaxIcon /></button>
          <button aria-label="Close"><CloseIcon /></button>
        </WindowControls>
      </DialogBar>
      <DialogBody>
        <Heading>
          <h3>REQ-1 Registration</h3>
          <PackageLink href="#package"><FolderIcon />Online Event Management Syst...</PackageLink>
          <button aria-label="Help"><HelpIcon /></button>
          <Separator $m={4} $color="#c4c4c4" />
        </Heading>
        <Tools $color="#222" $h={28}>
          <FormatButton $w={22} $bold>B</FormatButton>
          <FormatButton $w={21} $italic>I</FormatButton>
          <FormatButton $w={21} $deco="underline">U</FormatButton>
          <StrikeButton $w={24}>abc</StrikeButton>
          <Separator $color="#bdbdbd" />
          <FormatButton $w={24}><ListIcon /></FormatButton>
          <FormatButton $w={21}><NumberListIcon /></FormatButton>
          <FormatButton $w={17}><InkLetter $bar="#000">A</InkLetter></FormatButton>
          <CaretButton $w={12}><Caret /></CaretButton>
          <FormatButton $w={16}><MarkLetter $bar="#f5f51e" $fill="#f5f51e">ab</MarkLetter></FormatButton>
          <CaretButton $w={13}><Caret /></CaretButton>
          <ToolCombo $w={128}><select aria-label="Font family"><option>Segoe UI</option></select><Caret /></ToolCombo>
          <ToolCombo $w={41}><select aria-label="Font size"><option>10</option></select><Caret /></ToolCombo>
          <Separator $color="#bdbdbd" />
          <ToolEnd>
            <button aria-label="New requirement"><NewReqIcon /></button>
            <CaretButton $w={12}><Caret /></CaretButton>
            <Separator $m={2} $color="#bdbdbd" />
            <NavButton aria-label="Print"><PrintIcon /></NavButton>
            <Separator $m={2} $color="#bdbdbd" />
            <NavButton aria-label="First"><NavIcon d="M5 5h1.500v6H5zM11 4.500v7L7 8z" /></NavButton>
            <NavButton aria-label="Previous"><NavIcon d="M10 4.500v7L5.500 8z" /></NavButton>
            <NavButton aria-label="Next"><NavIcon d="M6 4.500v7L10.500 8z" /></NavButton>
            <NavButton aria-label="Last"><NavIcon d="M9.500 5H11v6H9.500zM5 4.500v7L9 8z" /></NavButton>
            <Separator $m={1} $color="#bdbdbd" />
          </ToolEnd>
        </Tools>
        <FormTabs>
          <FormTab type="button" $w={52} $active>Main</FormTab>
          <FormTab type="button" $w={84}>Supplemental</FormTab>
          <FormTab type="button" $w={73}>Traceability</FormTab>
          <FormTab type="button" $w={49}>Testing</FormTab>
        </FormTabs>
        <FormPanel>
          <FormRow $gap={7}>
            <LabelCell><FieldLabel htmlFor="name" $drop={8}>Name:</FieldLabel></LabelCell>
            <NameInput id="name" defaultValue="Registration" />
            <PriorityLabel htmlFor="priority" $drop={3}>Priority:</PriorityLabel>
            <Spinner>
              <input id="priority" type="number" defaultValue="1" />
              <SpinButtons>
                <button type="button" aria-label="Increase"><ArrowUp /></button>
                <button type="button" aria-label="Decrease"><Caret /></button>
              </SpinButtons>
            </Spinner>
          </FormRow>
          <FormRow $gap={6}>
            <LabelCell>
              <FieldLabel htmlFor="description" $drop={5}>Description:</FieldLabel>
              <ExpandButton type="button">Expand<DoubleUp /></ExpandButton>
            </LabelCell>
            <TextFrame><textarea id="description" /></TextFrame>
          </FormRow>
          <SelectGrid>
            <GridLabel htmlFor="type" $col={1}>Type:</GridLabel>
            <Select id="type" value="Functional" col={2} focus />
            <GridLabel htmlFor="status" $col={4}>Status:</GridLabel>
            <Select id="status" col={5} />
            <GridLabel htmlFor="release" $col={1}>Release:</GridLabel>
            <Select id="release" col={2} />
            <GridLabel htmlFor="assigned" $col={4}>Assigned To:</GridLabel>
            <Select id="assigned" col={5} />
            <GridLabel htmlFor="source" $col={1}>Source:</GridLabel>
            <Select id="source" col={2} />
          </SelectGrid>
        </FormPanel>
      </DialogBody>
    </Dialog>
  );
}

export default function App() {
  return (
    <Desktop>
      <GlobalStyle />
      <TitleBar>
        <QuickAccess>
          <LogoIcon />
          <Separator $m={6} />
          <QuickButton aria-label="Save all"><SaveAllIcon /></QuickButton>
          <QuickButton $gap={7} aria-label="Undo"><UndoIcon /></QuickButton>
          <QuickButton $w={18} aria-label="Undo list"><Caret /></QuickButton>
          <QuickButton $gap={2} aria-label="Redo"><UndoIcon c="#c5c8cc" d="#a2a5aa" flip /></QuickButton>
          <QuickButton $w={16} $gap={2} $color="#888" aria-label="Redo list"><Caret /></QuickButton>
          <QuickButton $w={24} $gap={12} aria-label="Customize"><Separator $m={4} /><MoreIcon /></QuickButton>
        </QuickAccess>
        <AppTitle>Online Event Management System.ucd - CaseComplete Professional</AppTitle>
        <WindowControls>
          <button aria-label="Minimize window"><MinIcon /></button>
          <button aria-label="Restore window"><RestoreIcon /></button>
          <button aria-label="Close window"><CloseIcon /></button>
        </WindowControls>
      </TitleBar>
      <RibbonTabs>
        <RibbonTab $w={53} $kind="file">File</RibbonTab>
        <RibbonTab $w={48} $kind="active">Home</RibbonTab>
        <RibbonTab $w={58}>Reports</RibbonTab>
        <RibbonTab $w={44}>Tools</RibbonTab>
        <RibbonTab $w={46}>View</RibbonTab>
        <RibbonTab $w={58}>Connect</RibbonTab>
      </RibbonTabs>
      <RibbonPanel />
      <Workspace>
        <DocumentArea>
          <DocTabs>
            {documentTabs.map(t => (
              <DocTab key={t.label} $w={t.w} $slant={t.slant} $active={t.active}><span>{t.label}</span></DocTab>
            ))}
          </DocTabs>
          <Breadcrumb>Online Event Management System</Breadcrumb>
          <GridFrame>
            <DataTable>
              <colgroup>
                <col width="330" /><col width="60" /><col width="86" /><col width="59" /><col width="83" /><col />
              </colgroup>
              <thead>
                <tr>
                  <th>Name<SortMark><svg width="6" height="6" viewBox="0 0 6 6"><path d="M.5 5.500L5 .5v5" fill="none" stroke="#aaa" /></svg></SortMark></th>
                  <th>ID</th><th>Type</th><th>Priority</th><th>Package</th>
                  <th aria-label="Flag"><svg width="10" height="9" viewBox="0 0 10 9"><path d="M3 0l6 3-5 2.500V9H3z" fill="#000" /></svg></th>
                </tr>
              </thead>
              <tbody>
                <tr><td>Registration</td><td>REQ-1</td><td>Functional</td><td>1</td><td>Online Event...</td><td /></tr>
              </tbody>
            </DataTable>
          </GridFrame>
          <PaneCaption $h={26} $line>Registration</PaneCaption>
          <NotesBox />
          <BottomTabs>
            <BottomTab $w={68} $active>Description</BottomTab>
            <BottomTab $w={57}>Notes - 0</BottomTab>
            <BottomTab $w={124}>Related Documents - 0</BottomTab>
            <BottomTab $w={60}>Issues - 0</BottomTab>
          </BottomTabs>
          <StatusBar />
        </DocumentArea>
        <Dock>
          <PaneCaption>Project Browser<PinIcon /></PaneCaption>
          <DockTools><ArrowUp s={8} /><MoreIcon /><MoreIcon /><MoreIcon /></DockTools>
          <Tree><li>Online Event Management System</li></Tree>
          <PaneCaption $h={28} $line>Properties<PinIcon /></PaneCaption>
          <DockTools $tint />
          <Properties>
            <PropertyList>
              <Property $head />
              <Property $end={48}>Registration</Property>
              <Property />
              <Property>2018 8:53 AM</Property>
              <Property>2018 8:54 AM</Property>
              <Property /><Property /><Property /><Property />
            </PropertyList>
            <ScrollTrack>
              <ArrowUp s={8} />
              <ScrollThumb><svg width="8" height="7" viewBox="0 0 8 7"><path d="M0 .5h8M0 3.500h8M0 6.500h8" stroke="#777" /></svg></ScrollThumb>
              <Caret s={8} c="#444" />
            </ScrollTrack>
          </Properties>
          <Hint />
        </Dock>
      </Workspace>
      <Taskbar>
        <TaskButton $w={45} aria-label="Start menu"><WindowsIcon /></TaskButton>
        <SearchBox><CortanaIcon /><input placeholder="Type here to search" aria-label="Type here to search" /><MicIcon /></SearchBox>
        <TaskButton $w={47} aria-label="Task view"><TaskViewIcon /></TaskButton>
        <TaskButton $running aria-label="File Explorer"><ExplorerIcon /></TaskButton>
        <TaskButton aria-label="Store"><StoreIcon /></TaskButton>
        <TaskButton aria-label="Chrome"><ChromeIcon /></TaskButton>
        <TaskButton aria-label="Word"><WordIcon /></TaskButton>
        <TaskButton $running aria-label="Recorder"><RecorderIcon /></TaskButton>
        <TaskButton $current aria-label="CaseComplete"><CaseIcon /></TaskButton>
        <Tray>
          <Clock>8:57 AM<br />4/20/2018</Clock>
          <ActionCenter aria-label="Notifications"><NotifyIcon /></ActionCenter>
          <ShowDesktop aria-label="Show desktop" />
        </Tray>
      </Taskbar>
      <RequirementDialog />
      <ClickRing width="46" height="46" viewBox="0 0 46 46" fill="none">
        <circle cx="22.500" cy="22.500" r="21" stroke="#cddcf8" strokeOpacity=".6" />
        <circle cx="22.500" cy="22.500" r="14" stroke="#7ba2ee" strokeWidth="2.500" />
      </ClickRing>
      <Pointer width="20" height="28" viewBox="0 0 20 28">
        <path d="M7 8v15l3.500-3.200 2.500 5.700 2.300-1-2.500-5.500H17z" fill="#fff" stroke="#000" strokeWidth="1.200" />
        <circle cx="7" cy="5.500" r="4" fill="#4d86ea" />
      </Pointer>
    </Desktop>
  );
}
